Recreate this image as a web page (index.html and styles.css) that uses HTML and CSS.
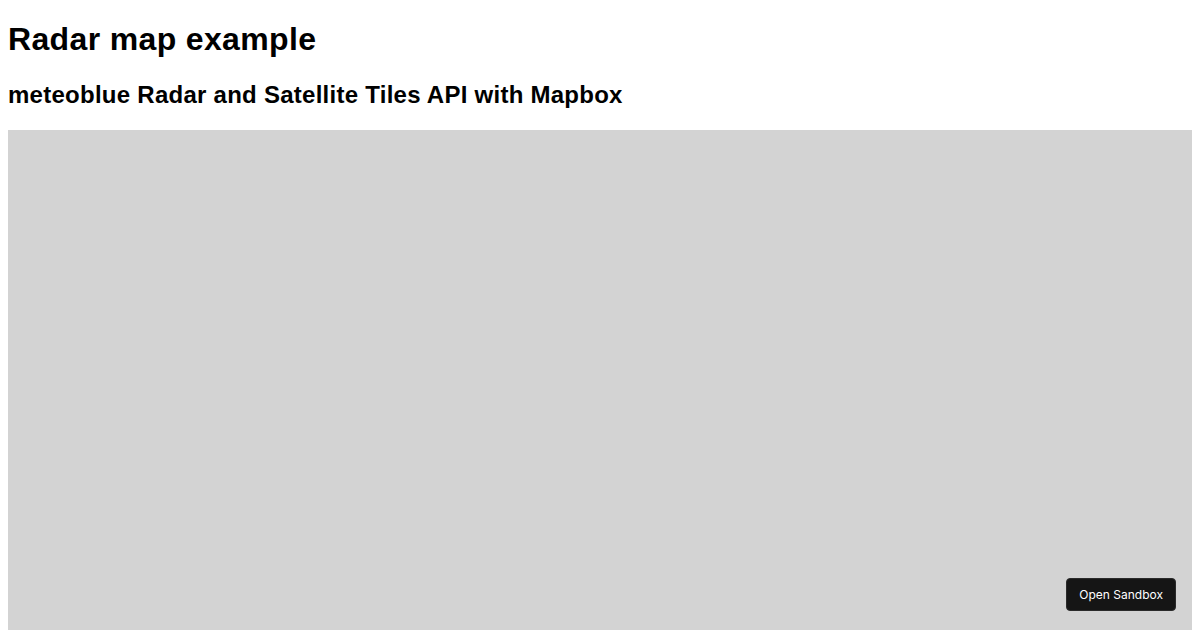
FILE: index.html
```html
<!DOCTYPE html>
<html>
<head>
<meta charset="utf-8">
<title>Radar map example</title>
<link rel="stylesheet" href="styles.css">
</head>
<body>
<h1 class="title">Radar map example</h1>
<h2 class="subtitle">meteoblue Radar and Satellite Tiles API with Mapbox</h2>
<div class="map" id="map"></div>
<a class="sandbox-btn" href="#">Open Sandbox</a>
</body>
</html>
```

FILE: styles.css
```css
body {
  margin: 8px;
  font-family: "Liberation Sans", Arial, sans-serif;
  color: #000;
  background: #fff;
}

.title {
  font-size: 32px;
  letter-spacing: 0.35px;
  margin: 13px 0 21px;
}

.subtitle {
  font-size: 24px;
  letter-spacing: 0.26px;
  margin: 23px 0 21px;
}

.map {
  height: 500px;
  background: #d3d3d3;
}

/* floating editor link in the corner */
.sandbox-btn {
  position: fixed;
  right: 24px;
  bottom: 19px;
  height: 33px;
  padding: 0 12px;
  display: flex;
  align-items: center;
  background: #151515;
  color: #fff;
  border: 1px solid #2a2a2a;
  border-radius: 4px;
  font-family: Inter, "Liberation Sans", sans-serif;
  font-size: 12px;
  text-decoration: none;
  box-sizing: border-box;
}
```
